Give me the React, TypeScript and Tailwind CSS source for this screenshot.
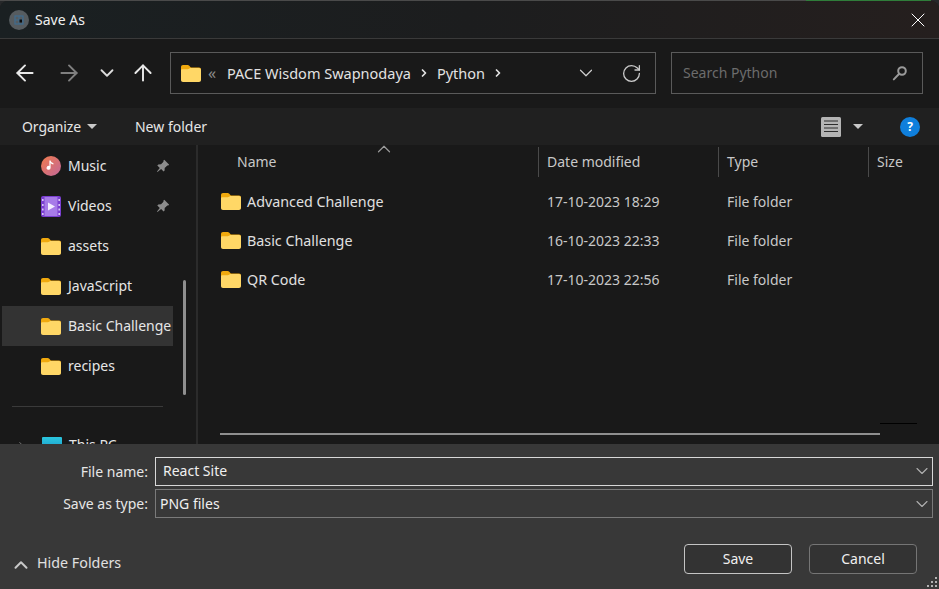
import React from 'react';
import { ArrowLeft, ArrowRight, ArrowUp, ChevronDown, ChevronUp, ChevronRight, RotateCw, X } from 'lucide-react';

const FolderIcon: React.FC<{ className?: string }> = ({ className = '' }) => (
  <svg width="20" height="17" viewBox="0 0 20 17" className={`shrink-0 ${className}`}>
    <path d="M0 2.2C0 .9.8 0 2 0h4.6c.7 0 1.2.3 1.7.8L9.8 2.4H18c1.2 0 2 .8 2 2V6H0z" fill="#f0a90e" />
    <path d="M0 5.6c0-.8.5-1.3 1.3-1.3h5.4c.6 0 1-.2 1.4-.5l1.1-.9H18c1.2 0 2 .8 2 2v10c0 1.2-.8 2-2 2H2c-1.2 0-2-.8-2-2z" fill="#ffd766" />
  </svg>
);

const MusicIcon = () => (
  <svg width="20" height="20" viewBox="0 0 20 20" className="shrink-0">
    <defs>
      <linearGradient id="mus" x1="0" y1="0" x2="1" y2="1">
        <stop offset="0" stopColor="#f07b4c" />
        <stop offset="1" stopColor="#c2679a" />
      </linearGradient>
    </defs>
    <circle cx="10" cy="10" r="10" fill="url(#mus)" />
    <path d="M9.6 4.5v7.2a2 2 0 1 1-1.2-1.8V4.5zM9.6 4.5c.3 1.6 1.4 2.1 2.8 2.6v1.4c-1.2-.3-2.2-.8-2.8-1.6z" fill="#fff" />
  </svg>
);

const VideoIcon = () => (
  <svg width="20" height="21" viewBox="0 0 20 21" className="shrink-0">
    <rect x="0" y="0" width="20" height="21" rx="2" fill="#7a3fd0" />
    <rect x="3.5" y="1" width="13" height="19" fill="#a77be8" />
    <path d="M7 6.5l7 4-7 4z" fill="#f3ecff" />
    <path d="M1 3h1.6v2H1zM1 8h1.6v2H1zM1 12.500h1.600v2H1zM1 17h1.600v2H1zM17.400 3H19v2h-1.600zM17.400 8H19v2h-1.600zM17.400 12.500H19v2h-1.600zM17.400 17H19v2h-1.600z" fill="#d8c6f5" />
  </svg>
);

const PinIcon = () => (
  <svg width="14" height="14" viewBox="0 0 14 14" className="shrink-0">
    <path d="M8.300.8l4.900 4.900-1 .9-.9-.2-2.600 2.500-.1 2.700-1 1-2.500-2.500L1.500 13 1 12.500l2.800-3.600L1.300 6.400l1-1 2.700-.1 2.500-2.600-.2-.9z" fill="#8c8c8c" />
  </svg>
);

const KeySearchIcon = () => (
  <svg width="16" height="16" viewBox="0 0 16 16" fill="none" stroke="#9a9a9a" strokeWidth="2">
    <circle cx="10" cy="6" r="3.800" />
    <path d="M7.200 8.800L1.800 14.400" strokeLinecap="round" />
  </svg>
);

const Caret = () => (
  <svg width="10" height="5" viewBox="0 0 10 5"><path d="M0 0h10L5 5z" fill="#c8c8c8" /></svg>
);

const ViewIcon = () => (
  <svg width="20" height="20" viewBox="0 0 20 20">
    <rect x="0" y="0" width="20" height="20" rx="1.500" fill="#b4b4b4" />
    <path d="M3 4h14M3 7.500h14M3 11h14M3 14.500h14" stroke="#2c2c2c" strokeWidth="1.200" />
  </svg>
);

const AppIcon = () => (
  <svg width="20" height="20" viewBox="0 0 20 20" className="shrink-0">
    <circle cx="10" cy="10" r="10" fill="#565c60" />
    <rect x="6" y="6" width="8" height="8" fill="none" stroke="#3f6c8f" strokeWidth="1.200" />
    <path d="M10 6v8M6 10h8" stroke="#3f6c8f" strokeWidth="1" />
    <rect x="10.500" y="9.500" width="2.500" height="3" fill="#0b0b0b" />
  </svg>
);

const Row: React.FC<{ label: string; icon: React.ReactNode; pinned?: boolean; active?: boolean }> = ({ label, icon, pinned, active }) => (
  <div className={`ml-[2px] w-[171px] h-10 shrink-0 flex items-center pl-[39px] gap-[7px] whitespace-nowrap overflow-hidden ${active ? 'bg-[#333333]' : ''}`}>
    <span className="w-5 flex justify-center shrink-0">{icon}</span>
    <span className="text-[#e6e6e6]">{label}</span>
    {pinned && <span className="ml-auto mr-[3px]"><PinIcon /></span>}
  </div>
);

const files = [
  { name: 'Advanced Challenge', date: '17-10-2023 18:29' },
  { name: 'Basic Challenge', date: '16-10-2023 22:33' },
  { name: 'QR Code', date: '17-10-2023 22:56' },
];

export default function App() {
  return (
    <div className="w-[939px] h-[589px] bg-[#26282a] overflow-hidden text-[14px] leading-[20px] text-[#e6e6e6] font-['Noto_Sans',sans-serif] flex flex-col">
      <div className="h-[1px] shrink-0 flex">
        <div className="w-[806px] bg-[#4a4a4a]" />
        <div className="w-[125px] bg-[#2f7d3a]" />
      </div>
      <div className="flex-1 min-h-0 flex flex-col rounded-t-[8px] overflow-hidden bg-[#191919]">
        {/* title bar */}
        <div className="h-[38px] shrink-0 flex items-center pl-[9px] pr-[9px] gap-[6px] bg-gradient-to-r from-[#1a2022] via-[#1c1d1e] to-[#251f1e] border-b border-[#3a3a3a]">
          <AppIcon />
          <span className="text-[#f0f0f0]">Save As</span>
          <X size={24} strokeWidth={1} className="ml-auto text-white" />
        </div>

        {/* nav row */}
        <div className="h-[69px] shrink-0 flex items-center bg-[#191919] pl-[12px] pb-[1px]">
          <ArrowLeft size={26} strokeWidth={1.800} className="shrink-0 text-[#e8e8e8]" />
          <ArrowRight size={26} strokeWidth={1.800} className="shrink-0 ml-[18px] text-[#7f7f7f]" />
          <ChevronDown size={22} strokeWidth={2} className="shrink-0 ml-[14px] text-[#dcdcdc]" />
          <ArrowUp size={26} strokeWidth={1.800} className="shrink-0 ml-[12px] text-[#e8e8e8]" />
          <div className="shrink-0 ml-[14px] w-[486px] h-[42px] border border-[#5a5a5a] flex items-center pl-[10px] pr-[13px] whitespace-nowrap">
            <FolderIcon />
            <span className="ml-[6px] w-[10px] text-center text-[#8c8c8c] text-[16px]">«</span>
            <span className="ml-[10px] text-[14.500px] text-[#e2e2e2]">PACE Wisdom Swapnodaya</span>
            <ChevronRight size={12} strokeWidth={3.500} className="ml-[7px] text-[#e2e2e2]" />
            <span className="ml-[7px] text-[14.500px] text-[#e2e2e2]">Python</span>
            <ChevronRight size={12} strokeWidth={3.500} className="ml-[7px] text-[#e2e2e2]" />
            <ChevronDown size={22} strokeWidth={1.300} className="ml-auto mr-[24px] text-[#cfcfcf]" />
            <RotateCw size={21} strokeWidth={1.500} className="text-[#c8c8c8]" />
          </div>
          <div className="shrink-0 ml-[15px] w-[252px] h-[42px] border border-[#5a5a5a] flex items-center pl-[11px] pr-[14px]">
            <span className="text-[#6c6c6c]">Search Python</span>
            <span className="ml-auto"><KeySearchIcon /></span>
          </div>
        </div>

        {/* toolbar */}
        <div className="h-[37px] shrink-0 flex items-center bg-[#202020] pl-[22px] pr-[19px]">
          <span className="text-[#e6e6e6] tracking-[-0.1px]">Organize</span>
          <span className="ml-[6px]"><Caret /></span>
          <span className="ml-[38px] text-[#e6e6e6]">New folder</span>
          <span className="ml-auto"><ViewIcon /></span>
          <span className="ml-[12px]"><Caret /></span>
          <span className="ml-[37px] w-5 h-5 rounded-full bg-[#0f7fdc] text-white text-[12px] font-bold flex items-center justify-center">?</span>
        </div>

        {/* body */}
        <div className="h-[299px] shrink-0 flex bg-[#191919] overflow-hidden">
          <div className="relative w-[196px] shrink-0 flex flex-col pt-[1px] overflow-hidden">
            <Row label="Music" icon={<MusicIcon />} pinned />
            <Row label="Videos" icon={<VideoIcon />} pinned />
            <Row label="assets" icon={<FolderIcon />} />
            <Row label="JavaScript" icon={<FolderIcon />} />
            <Row label="Basic Challenge" icon={<FolderIcon />} active />
            <Row label="recipes" icon={<FolderIcon />} />
            <div className="ml-[12px] mt-[20px] w-[151px] h-px shrink-0 bg-[#3a3a3a]" />
            <div className="mt-[28px] ml-[16px] flex items-center gap-[16px] h-5 shrink-0 whitespace-nowrap">
              <ChevronRight size={10} className="text-[#8a8a8a]" />
              <span className="w-5 h-[16px] rounded-[1px] bg-gradient-to-b from-[#2bc6de] to-[#1a94c8]" />
              <span className="-ml-[9px] text-[#e6e6e6]">This PC</span>
            </div>
            <div className="absolute left-[183px] top-[135px] w-[3px] h-[115px] rounded-full bg-[#8f8f8f]" />
          </div>
          <div className="w-[2px] shrink-0 bg-[#2b2b2b]" />

          <div className="relative flex-1 min-w-0">
            <div className="relative h-[33px] flex items-center text-[#c8c8c8]">
              <span className="w-[340px] pl-[39px] shrink-0">Name</span>
              <span className="w-[180px] pl-[8px] h-[30px] flex items-center shrink-0 border-l border-[#4a4a4a]">Date modified</span>
              <span className="w-[150px] pl-[8px] h-[30px] flex items-center shrink-0 border-l border-[#4a4a4a]">Type</span>
              <span className="pl-[8px] h-[30px] flex items-center border-l border-[#4a4a4a]">Size</span>
              <ChevronUp size={22} strokeWidth={1.300} className="absolute left-[175px] -top-[7px] text-[#9a9a9a]" />
            </div>
            <div className="flex flex-col pt-[4px]">
              {files.map((f) => (
                <div key={f.name} className="h-[39px] flex items-center whitespace-nowrap">
                  <div className="w-[340px] pl-[23px] flex items-center gap-[6px] shrink-0">
                    <FolderIcon />
                    <span className="text-[14.300px] text-[#e0e0e0]">{f.name}</span>
                  </div>
                  <span className="w-[180px] pl-[9px] shrink-0 text-[#c8c8c8]">{f.date}</span>
                  <span className="pl-[9px] text-[#c8c8c8]">File folder</span>
                </div>
              ))}
            </div>
            <div className="absolute left-[22px] top-[288px] w-[660px] h-[2px] bg-[#8f8f8f]" />
            <div className="absolute left-[682px] top-[278px] w-[37px] h-px bg-black" />
          </div>
        </div>

        {/* bottom form */}
        <div className="relative flex-1 bg-[#383838] flex flex-col pt-[13px] pr-[6px]">
          <div className="flex items-center h-[29px]">
            <span className="w-[148px] text-right shrink-0">File name:</span>
            <div className="ml-[7px] flex-1 h-[29px] border border-[#d8d8d8] flex items-center pl-[7px] pb-[1px]">
              <span className="text-[#f0f0f0] pb-[1px]">React Site</span>
              <ChevronDown size={20} strokeWidth={1.300} className="ml-auto text-[#b0b0b0]" />
            </div>
          </div>
          <div className="flex items-center h-[29px] mt-[3px]">
            <span className="w-[148px] text-right shrink-0">Save as type:</span>
            <div className="ml-[7px] flex-1 h-[29px] border border-[#7a7a7a] flex items-center pl-[4px]">
              <span className="text-[#f0f0f0]">PNG files</span>
              <ChevronDown size={20} strokeWidth={1.300} className="ml-auto text-[#b0b0b0]" />
            </div>
          </div>
          <div className="flex items-start h-[30px] mt-[26px] pl-[10px] pr-[16px]">
            <ChevronUp size={22} strokeWidth={2.200} className="mt-[10px] shrink-0 text-[#c8c8c8]" />
            <span className="ml-[5px] text-[14.300px] text-[#e0e0e0] mt-[9px]">Hide Folders</span>
            <button className="ml-auto w-[108px] h-[30px] rounded-[4px] border border-[#c4c4c4] bg-[#333333] text-[#f0f0f0]">Save</button>
            <button className="ml-[17px] w-[108px] h-[30px] rounded-[4px] border border-[#757575] bg-[#333333] text-[#f0f0f0]">Cancel</button>
          </div>
          <svg width="11" height="11" viewBox="0 0 11 11" className="absolute right-[1px] bottom-[1px]" fill="#b0b0b0">
            <rect x="8" y="0" width="2" height="2" /><rect x="4" y="4" width="2" height="2" /><rect x="8" y="4" width="2" height="2" /><rect x="0" y="8" width="2" height="2" /><rect x="4" y="8" width="2" height="2" /><rect x="8" y="8" width="2" height="2" />
          </svg>
        </div>
      </div>
    </div>
  );
}
